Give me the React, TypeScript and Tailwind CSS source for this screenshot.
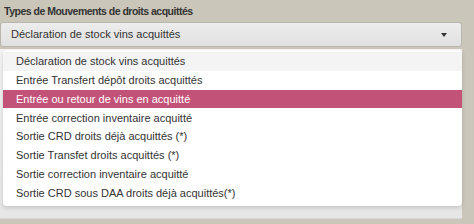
import React from "react";

const options = [
  "Déclaration de stock vins acquittés",
  "Entrée Transfert dépôt droits acquittés",
  "Entrée ou retour de vins en acquitté",
  "Entrée correction inventaire acquitté",
  "Sortie CRD droits déjà acquittés (*)",
  "Sortie Transfet droits acquittés (*)",
  "Sortie correction inventaire acquitté",
  "Sortie CRD sous DAA droits déjà acquittés(*)",
];

const App = () => {
  const active = 2;
  return (
    <div className="w-[474px] h-[224px] overflow-hidden bg-[#cac6ba] font-['Liberation_Sans',Arial,sans-serif] text-[11px] text-[#333]">
      <div className="pl-1 pt-[4px] h-[20px] text-[10.5px] tracking-[-0.5px] font-bold text-[#333]">
        Types de Mouvements de droits acquittés
      </div>
      <div className="relative w-[462px]">
        {/* select */}
        <div className="h-[25px] mt-[2px] flex items-center justify-between pl-[10px] pr-[14px] rounded-[3px] border border-[#b9b6ad] bg-gradient-to-b from-[#ededed] to-[#e0e0e0]">
          <span>Déclaration de stock vins acquittés</span>
          <span className="w-0 h-0 border-l-[3px] border-r-[3px] border-t-[4px] border-l-transparent border-r-transparent border-t-[#333]" />
        </div>
        {/* field behind */}
        <div className="h-[170px] mt-[2px] bg-gradient-to-b from-[#f3f3f3] to-[#e6e6e6] border-b border-[#d6d6d6]" />
        {/* dropdown list */}
        <div className="absolute left-[3px] right-0 top-[28px] pt-[2px] pb-[4px] bg-white rounded-[4px] shadow-[0_2px_4px_rgba(0,0,0,0.15)]">
          {options.map((o, i) => (
            <div
              key={o}
              className={`h-[18.8px] flex items-center pl-[13px] ${
                i === active
                  ? "bg-[#c25278] text-white"
                  : i === 0
                  ? "bg-[#f4f4f4]"
                  : "bg-white"
              }`}
            >
              {o}
            </div>
          ))}
        </div>
      </div>
    </div>
  );
};

export default App;
